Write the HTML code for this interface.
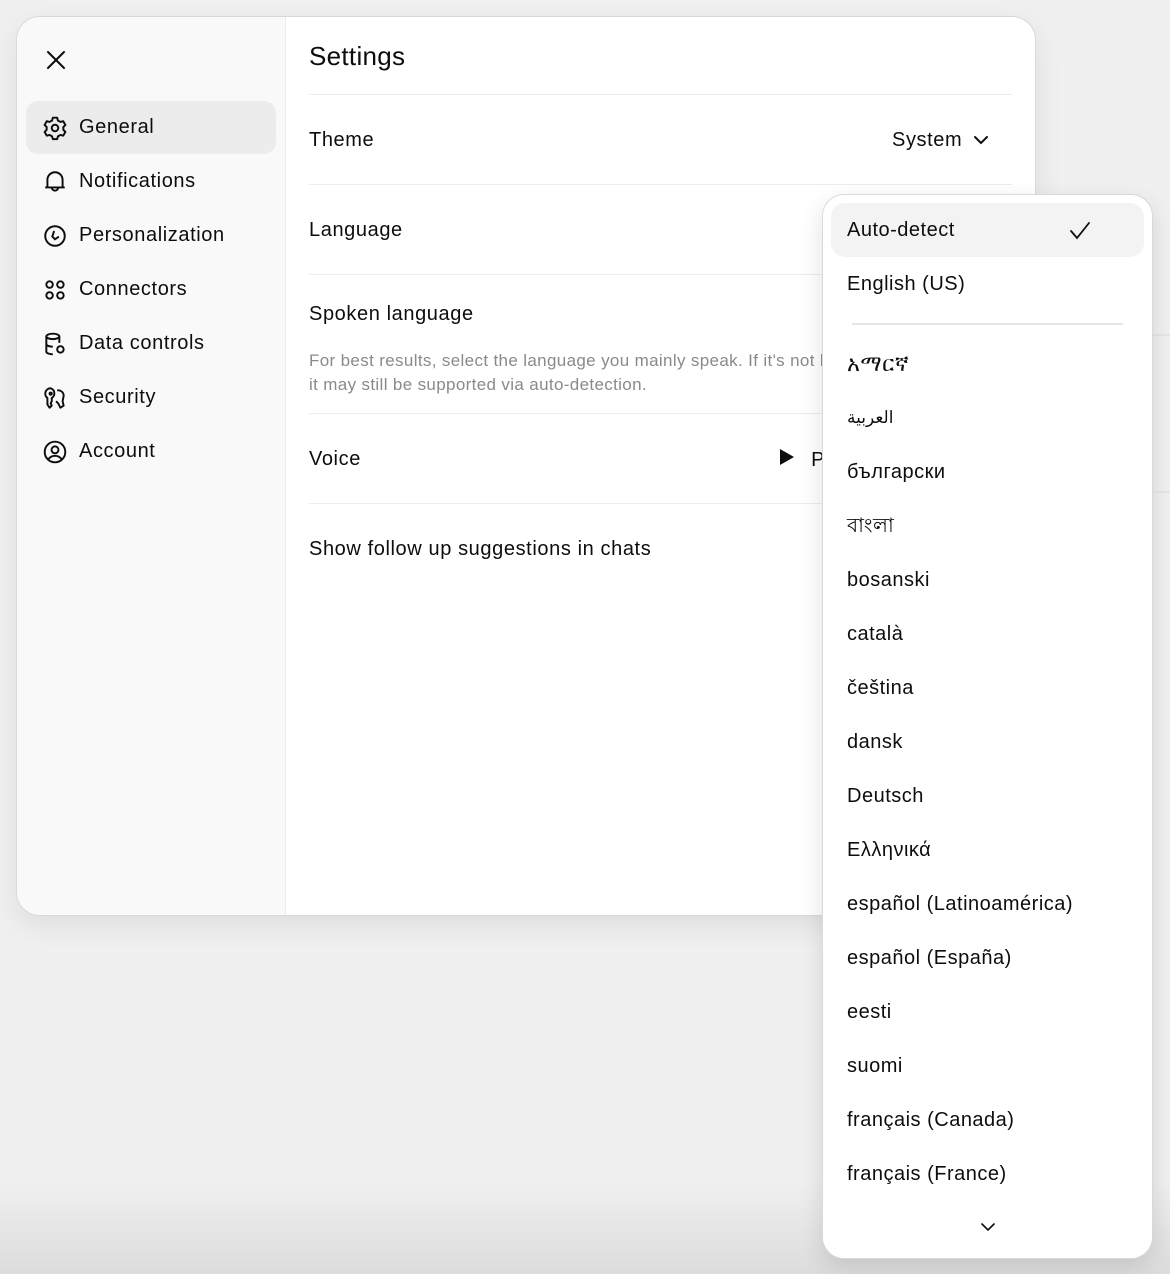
<!DOCTYPE html>
<html><head><meta charset="utf-8"><style>
*{box-sizing:border-box;margin:0;padding:0}
body{width:1170px;height:1274px;overflow:hidden;background:linear-gradient(#f0f0f0 0,#f0f0f0 1180px,#dcdcdc 1274px);font-family:"Liberation Sans","Noto Sans CJK SC",sans-serif;color:#0d0d0d;position:relative}
.bgl{position:absolute;left:1040px;height:2px;width:130px;background:#e6e6e6}
.modal{position:absolute;left:16px;top:16px;width:1020px;height:900px;border-radius:24px;background:#fff;overflow:hidden;border:1px solid #d9d9d9;box-shadow:0 10px 30px rgba(0,0,0,.08)}
.side{position:absolute;left:0;top:0;width:269px;height:100%;background:#f9f9f9;border-right:1px solid #ececec}
.x{position:absolute;left:28px;top:32px}
.item{position:absolute;left:9px;width:250px;height:53px;border-radius:12px;display:flex;align-items:center;padding-left:16px;font-size:20px;letter-spacing:.6px}
.item svg{margin-right:11px}
.sel{background:#ececec}
.main{position:absolute;left:292px;top:0;right:23px}
.title{position:absolute;top:24px;font-size:26px;letter-spacing:.3px}
.hr{position:absolute;left:0;right:0;height:1px;background:#ececec}
.row{position:absolute;font-size:20px;letter-spacing:.6px}
.desc{position:absolute;top:332px;font-size:17px;color:#8a8a8a;line-height:24px;width:560px;letter-spacing:.35px}
.dd{position:absolute;left:822px;top:194px;width:331px;height:1065px;background:#fff;border:1px solid #d9d9d9;border-radius:22px;box-shadow:0 8px 24px rgba(0,0,0,.12);overflow:hidden}
.opt{position:absolute;left:24px;font-size:20px;line-height:24px;letter-spacing:.5px}
.hl{position:absolute;left:8px;top:8px;width:313px;height:54px;background:#f3f3f3;border-radius:14px}
.fade{position:absolute;left:0;right:0;bottom:0;height:50px;background:linear-gradient(rgba(255,255,255,0),#fff 70%)}
</style></head><body>
<div class="bgl" style="top:334px"></div><div class="bgl" style="top:491px"></div>
<div class="modal">
<div class="side">
<svg class="x" width="22" height="22" viewBox="0 0 22 22" fill="none" stroke="#0d0d0d" stroke-width="2" stroke-linecap="round"><path d="M3 3L19 19M19 3L3 19"/></svg>
<div class="item sel" style="top:84px"><svg width="26" height="26" viewBox="0 0 24 24" fill="none" stroke="#0d0d0d" stroke-width="1.8"><path d="M10 2.5h4l.7 2.6 2.3 1.3 2.6-.7 2 3.5-1.9 1.9v2.6l1.9 1.9-2 3.5-2.6-.7-2.3 1.3-.7 2.6h-4l-.7-2.6-2.3-1.3-2.6.7-2-3.5 1.9-1.9v-2.6L2.4 9.2l2-3.5 2.6.7 2.3-1.3z" stroke-linejoin="round"/><circle cx="12" cy="12" r="3"/></svg>General</div>
<div class="item" style="top:138px"><svg width="26" height="26" viewBox="0 0 24 24" fill="none" stroke="#0d0d0d" stroke-width="1.8" stroke-linejoin="round"><path d="M5 17V10a7 7 0 0114 0v7zM3 17h18M9 17a3 3 0 006 0"/></svg>Notifications</div>
<div class="item" style="top:192px"><svg width="26" height="26" viewBox="0 0 24 24" fill="none" stroke="#0d0d0d" stroke-width="1.8" stroke-linecap="round"><circle cx="12" cy="12" r="9"/><path d="M11 8l-1.5 4.5L12 15l3-2"/></svg>Personalization</div>
<div class="item" style="top:246px"><svg width="26" height="26" viewBox="0 0 24 24" fill="none" stroke="#0d0d0d" stroke-width="1.8"><circle cx="7" cy="7" r="3"/><circle cx="17" cy="7" r="3"/><circle cx="7" cy="17" r="3"/><circle cx="17" cy="17" r="3"/></svg>Connectors</div>
<div class="item" style="top:300px"><svg width="26" height="26" viewBox="0 0 24 24" fill="none" stroke="#0d0d0d" stroke-width="1.8"><ellipse cx="10" cy="5" rx="6" ry="2.5"/><path d="M4 5v14c0 1.4 2.7 2.5 6 2.5M16 5v6M4 12c0 1.4 2.7 2.5 6 2.5"/><circle cx="17" cy="17" r="3"/></svg>Data controls</div>
<div class="item" style="top:354px"><svg width="26" height="26" viewBox="0 0 24 24" fill="none" stroke="#0d0d0d" stroke-width="1.8" stroke-linejoin="round"><path d="M8 3a5 5 0 00-3 9v6l2 3 2-2-1-2 1-2V12a5 5 0 00-1-9zM14 5a5 5 0 016 5l-1 5 1 4-3 2-2-4-2-2"/><circle cx="8" cy="8" r="1"/></svg>Security</div>
<div class="item" style="top:408px"><svg width="26" height="26" viewBox="0 0 24 24" fill="none" stroke="#0d0d0d" stroke-width="1.8"><circle cx="12" cy="12" r="9.5"/><circle cx="12" cy="10" r="3.2"/><path d="M6 18.5c1.5-2 3.5-3 6-3s4.5 1 6 3"/></svg>Account</div>
</div>
<div class="main">
<div class="title">Settings</div>
<div class="hr" style="top:77px"></div>
<div class="row" style="top:112px">Theme</div>
<div class="row" style="top:112px;left:583px">System <svg width="18" height="12" viewBox="0 0 18 12" fill="none" stroke="#0d0d0d" stroke-width="2" stroke-linecap="round" style="margin-left:4px"><path d="M3 3l6 6 6-6"/></svg></div>
<div class="hr" style="top:167px"></div>
<div class="row" style="top:202px">Language</div>
<div class="hr" style="top:257px"></div>
<div class="row" style="top:286px">Spoken language</div>
<div class="desc">For best results, select the language you mainly speak. If it's not listed, it may still be supported via auto-detection.</div>
<div class="hr" style="top:396px"></div>
<div class="row" style="top:431px">Voice</div>
<div class="row" style="top:431px;left:470px"><svg width="16" height="18" viewBox="0 0 16 18"><path d="M1 1l14 8-14 8z" fill="#0d0d0d"/></svg> <span style="margin-left:10px">Play</span></div>
<div class="hr" style="top:486px"></div>
<div class="row" style="top:521px">Show follow up suggestions in chats</div>
</div>
</div>
<div class="dd">
<div class="hl"></div>
<div class="opt" style="top:23px">Auto-detect</div>
<svg style="position:absolute;left:246px;top:26px" width="22" height="20" viewBox="0 0 22 20" fill="none" stroke="#0d0d0d" stroke-width="1.8" stroke-linecap="round"><path d="M2 10l6 7L20 2"/></svg>
<div class="opt" style="top:77px">English (US)</div>
<div style="position:absolute;left:29px;top:128px;width:271px;height:2px;background:#e5e5e5"></div>
<div class="opt" style="top:157px;font-size:22px">አማርኛ</div>
<div class="opt" style="top:211px;font-size:17px">العربية</div>
<div class="opt" style="top:265px">български</div>
<div class="opt" style="top:319px">বাংলা</div>
<div class="opt" style="top:373px">bosanski</div>
<div class="opt" style="top:427px">català</div>
<div class="opt" style="top:481px">čeština</div>
<div class="opt" style="top:535px">dansk</div>
<div class="opt" style="top:589px">Deutsch</div>
<div class="opt" style="top:643px">Ελληνικά</div>
<div class="opt" style="top:697px">español (Latinoamérica)</div>
<div class="opt" style="top:751px">español (España)</div>
<div class="opt" style="top:805px">eesti</div>
<div class="opt" style="top:859px">suomi</div>
<div class="opt" style="top:913px">français (Canada)</div>
<div class="opt" style="top:967px">français (France)</div>
<div class="fade"></div>
<svg style="position:absolute;left:156px;top:1026px" width="18" height="12" viewBox="0 0 18 12" fill="none" stroke="#0d0d0d" stroke-width="1.6" stroke-linecap="round"><path d="M3 3l6 6 6-6"/></svg>
</div>
</body></html>
